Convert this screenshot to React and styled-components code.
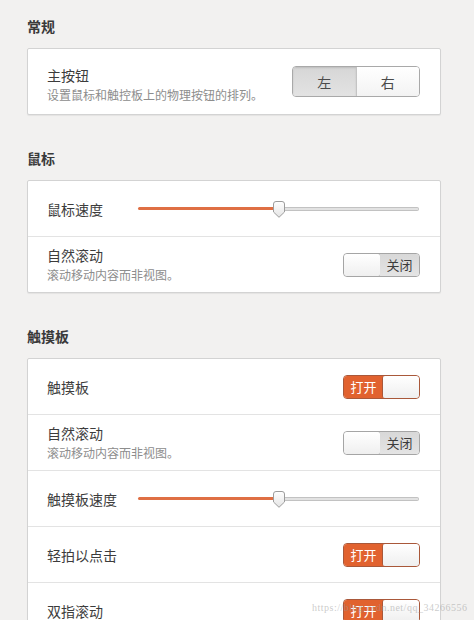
import React from 'react'
import styled, { createGlobalStyle } from 'styled-components'

const GlobalStyle = createGlobalStyle`
    body {
        margin: 0;
        background: #f2f1f0;
        overflow: hidden;
        font-family: "Noto Sans CJK SC", "Noto Sans", sans-serif;
        color: #3c3c3c;
    }
`

const Page = styled.div`
    padding: 16px 33px 0 27px;
    position: relative;
    min-height: 620px;
    box-sizing: border-box;
`

const Section = styled.section`
    & + & {
        margin-top: 33px;
    }
`

const Heading = styled.h2`
    margin: 0 0 12px;
    font-size: 14px;
    line-height: 20px;
    font-weight: 700;
    color: #3a3a3a;
`

const Card = styled.div`
    background: #fff;
    border: 1px solid #d3d3d3;
    border-radius: 2px;
    box-shadow: 0 1px 1px rgba(0, 0, 0, 0.06);
`

const Row = styled.div`
    display: flex;
    align-items: center;
    box-sizing: border-box;
    height: ${props => props.tall ? "65px" : "55px"};
    padding: 0 20px 0 19px;
    & + & {
        height: 56px;
        border-top: 1px solid #e3e3e3;
    }
`

const Texts = styled.div`
    flex: 1;
    display: flex;
    flex-direction: column;
    padding-top: ${props => props.tall ? "5px" : "0"};
`

const Title = styled.span`
    font-size: 14px;
    line-height: 20px;
    color: #3c3c3c;
`

const Sub = styled.span`
    font-size: 12px;
    line-height: 18px;
    margin-top: 1px;
    color: #8d8d8d;
`

const Label = styled.span`
    width: 91px;
    flex-shrink: 0;
    font-size: 14px;
    line-height: 20px;
`

const Segmented = styled.div`
    display: flex;
    width: 128px;
    height: 31px;
    box-sizing: border-box;
    border: 1px solid #a9a9a9;
    border-radius: 4px;
    overflow: hidden;
`

const Segment = styled.div`
    flex: 1;
    display: flex;
    align-items: center;
    justify-content: center;
    font-size: 14px;
    color: #4a4a4a;
    background: ${props => props.active
        ? "linear-gradient(#d6d6d6, #e3e3e3)"
        : "linear-gradient(#ffffff, #f3f3f3)"};
    box-shadow: ${props => props.active ? "inset 0 1px 2px rgba(0,0,0,0.12)" : "none"};
    & + & {
        border-left: 1px solid #c4c4c4;
    }
`

const Slider = styled.div`
    flex: 1;
    position: relative;
    height: 18px;
    display: flex;
    align-items: center;
    margin-right: 1px;
`

const Fill = styled.div`
    height: 3px;
    background: #df6f44;
    border-radius: 2px 0 0 2px;
`

const Rest = styled.div`
    flex: 1;
    height: 2px;
    background: #e2e2e2;
    border: 1px solid #c2c2c2;
    border-left: none;
    border-radius: 0 2px 2px 0;
`

const Thumb = styled.svg`
    position: absolute;
    top: 1px;
    margin-left: -6px;
`

const Switch = styled.div`
    display: flex;
    width: 77px;
    height: 24px;
    box-sizing: border-box;
    border: 1px solid ${props => props.on ? "#a9583a" : "#a5a5a5"};
    border-radius: 4px;
    overflow: hidden;
    flex-shrink: 0;
`

const SwitchText = styled.span`
    width: 39px;
    display: flex;
    align-items: center;
    justify-content: center;
    font-size: 13px;
    color: ${props => props.on ? "#fff" : "#3c3c3c"};
    background: ${props => props.on ? "#e1622f" : "linear-gradient(#d8d8d8, #e4e4e4)"};
`

const Knob = styled.span`
    flex: 1;
    background: linear-gradient(#ffffff, #efefef);
    border-radius: 3px;
    box-shadow: ${props => props.on ? "-1px 0 0 #a9583a" : "1px 0 0 #a5a5a5"};
`

const Watermark = styled.span`
    position: absolute;
    left: 312px;
    top: 602px;
    font-family: "Liberation Serif", serif;
    font-size: 10px;
    letter-spacing: 0.5px;
    color: rgba(150, 150, 150, 0.5);
    white-space: nowrap;
    pointer-events: none;
`

const ToggleSwitch = ({ on }) => (
    <Switch on={on}>
        {on ? (
            <>
                <SwitchText on>打开</SwitchText>
                <Knob on />
            </>
        ) : (
            <>
                <Knob />
                <SwitchText>关闭</SwitchText>
            </>
        )}
    </Switch>
)

const SpeedSlider = ({ value }) => (
    <Slider>
        <Fill style={{ width: `${value}%` }} />
        <Rest />
        <Thumb width="12" height="17" viewBox="0 0 12 17" style={{ left: `${value}%` }}>
            <defs>
                <linearGradient id="thumbGrad" x1="0" y1="0" x2="0" y2="1">
                    <stop offset="0" stopColor="#ffffff" />
                    <stop offset="1" stopColor="#e4e4e4" />
                </linearGradient>
            </defs>
            <path d="M3 0.5 H9 Q11.5 0.5 11.5 3 V11 L6 16.3 L0.5 11 V3 Q0.5 0.5 3 0.5 Z"
                fill="url(#thumbGrad)" stroke="#9c9c9c" strokeWidth="1" />
        </Thumb>
    </Slider>
)

const SettingRow = ({ title, sub, children }) => (
    <Row>
        <Texts>
            <Title>{title}</Title>
            {sub && <Sub>{sub}</Sub>}
        </Texts>
        {children}
    </Row>
)

const SliderRow = ({ label, value }) => (
    <Row>
        <Label>{label}</Label>
        <SpeedSlider value={value} />
    </Row>
)

const App = () => {
    return (
        <Page>
            <GlobalStyle />
            <Section>
                <Heading>常规</Heading>
                <Card>
                    <Row tall>
                        <Texts tall>
                            <Title>主按钮</Title>
                            <Sub>设置鼠标和触控板上的物理按钮的排列。</Sub>
                        </Texts>
                        <Segmented>
                            <Segment active>左</Segment>
                            <Segment>右</Segment>
                        </Segmented>
                    </Row>
                </Card>
            </Section>
            <Section>
                <Heading>鼠标</Heading>
                <Card>
                    <SliderRow label="鼠标速度" value={50} />
                    <SettingRow title="自然滚动" sub="滚动移动内容而非视图。">
                        <ToggleSwitch />
                    </SettingRow>
                </Card>
            </Section>
            <Section>
                <Heading>触摸板</Heading>
                <Card>
                    <SettingRow title="触摸板">
                        <ToggleSwitch on />
                    </SettingRow>
                    <SettingRow title="自然滚动" sub="滚动移动内容而非视图。">
                        <ToggleSwitch />
                    </SettingRow>
                    <SliderRow label="触摸板速度" value={50} />
                    <SettingRow title="轻拍以点击">
                        <ToggleSwitch on />
                    </SettingRow>
                    <SettingRow title="双指滚动">
                        <ToggleSwitch on />
                    </SettingRow>
                </Card>
            </Section>
            <Watermark>https://blog.csdn.net/qq_34266556</Watermark>
        </Page>
    )
}

export default App
